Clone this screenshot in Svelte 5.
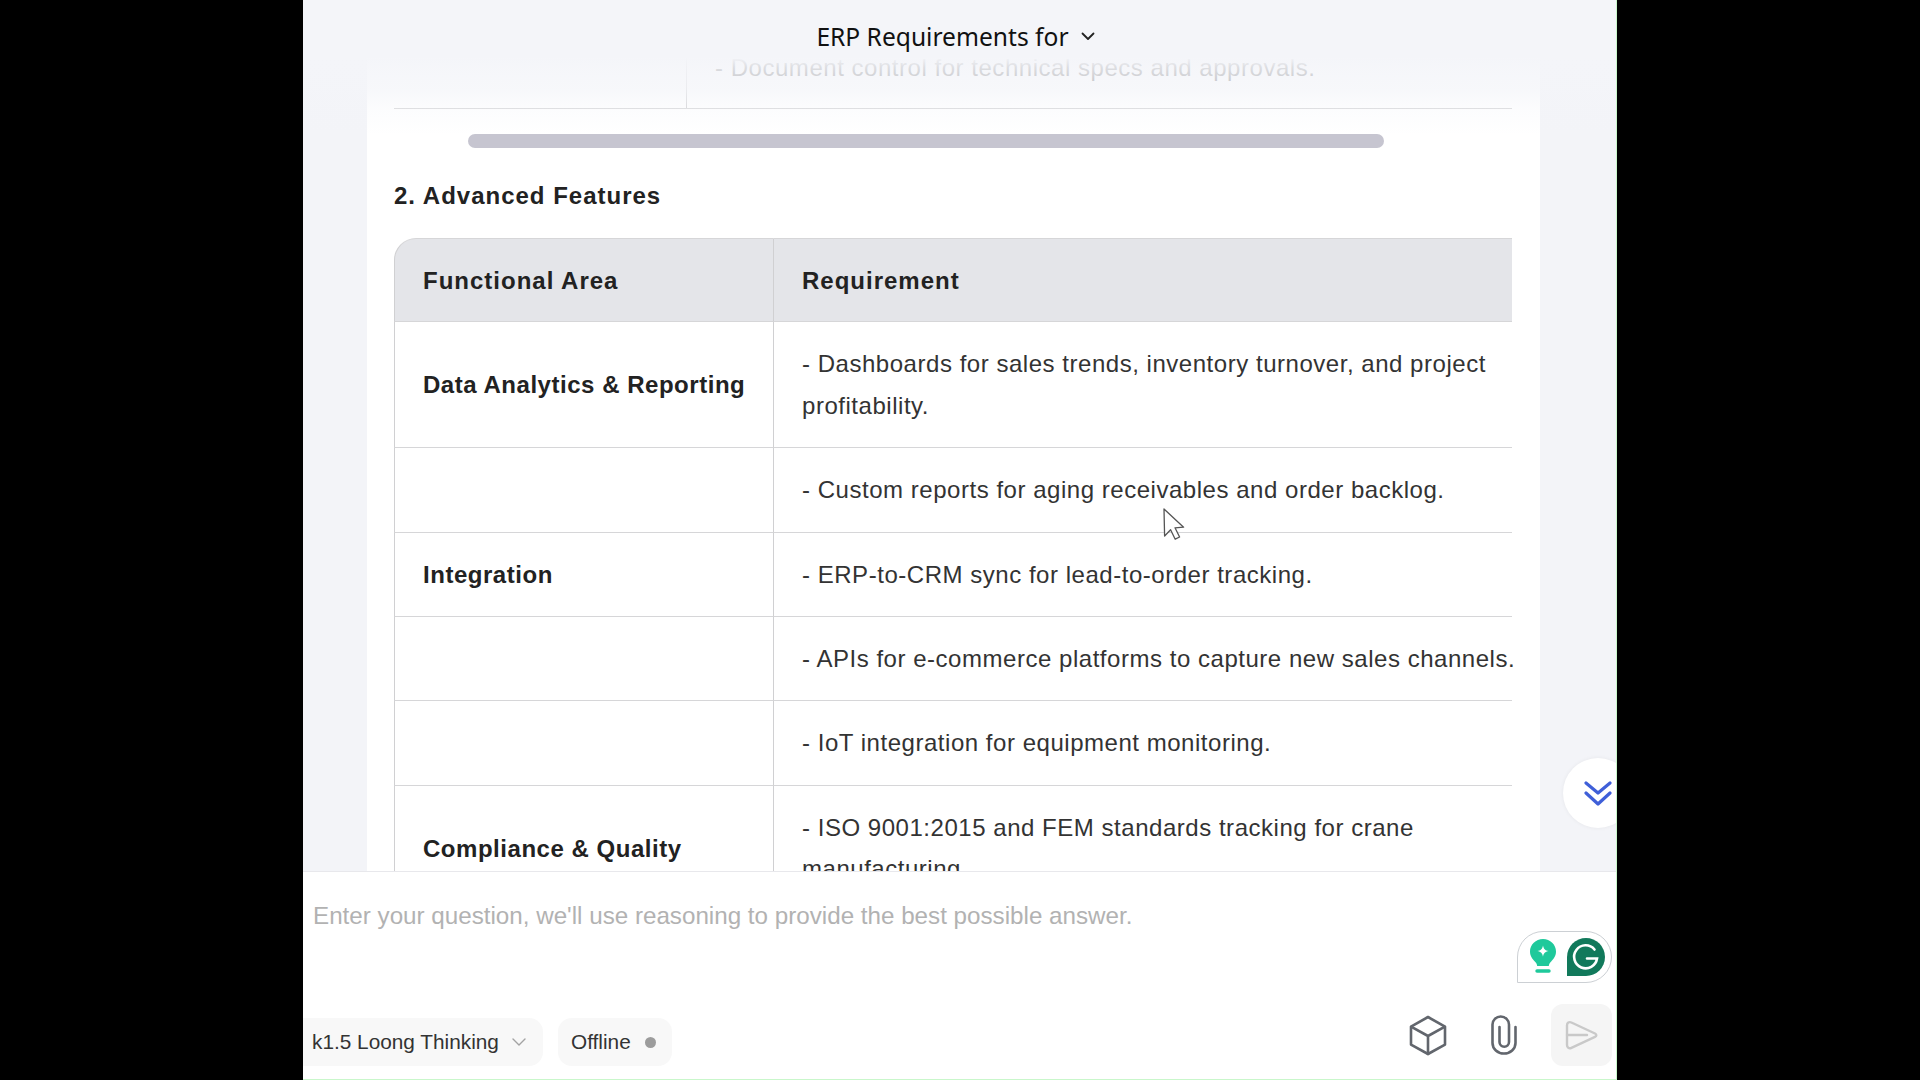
<script lang="ts">
	type Row = { area: string; lines: string[] };

	const rows: Row[] = [
		{
			area: 'Data Analytics & Reporting',
			lines: ['- Dashboards for sales trends, inventory turnover, and project', 'profitability.']
		},
		{ area: '', lines: ['- Custom reports for aging receivables and order backlog.'] },
		{ area: 'Integration', lines: ['- ERP-to-CRM sync for lead-to-order tracking.'] },
		{ area: '', lines: ['- APIs for e-commerce platforms to capture new sales channels.'] },
		{ area: '', lines: ['- IoT integration for equipment monitoring.'] },
		{
			area: 'Compliance & Quality',
			lines: ['- ISO 9001:2015 and FEM standards tracking for crane', 'manufacturing.']
		}
	];
</script>

<div class="frame">
	<main class="chat">
		<header class="topbar">
			<span class="title">ERP Requirements for</span>
			<svg class="title-caret" width="14" height="9" viewBox="0 0 14 9" fill="none" stroke="#222" stroke-width="1.8" stroke-linecap="round" stroke-linejoin="round">
				<path d="M1.5 1.5 7 7l5.5-5.5" />
			</svg>
		</header>

		<div class="card">
			<div class="tail-row">
				<div class="tail-left"></div>
				<div class="tail-right">- Document control for technical specs and approvals.</div>
			</div>
			<div class="scroll-thumb"></div>

			<h2>2. Advanced Features</h2>

			<table>
				<thead>
					<tr>
						<th class="col-area">Functional Area</th>
						<th>Requirement</th>
					</tr>
				</thead>
				<tbody>
					{#each rows as row}
						<tr>
							<td class="col-area">{row.area}</td>
							<td>
								{#each row.lines as line}
									<div>{line}</div>
								{/each}
							</td>
						</tr>
					{/each}
				</tbody>
			</table>
		</div>

		<button type="button" class="to-bottom" aria-label="Scroll to bottom">
			<svg width="28" height="25" viewBox="0 0 28 25" fill="none" stroke="#3f5fd8" stroke-width="3.2" stroke-linecap="round" stroke-linejoin="round">
				<path d="M2 2l12 10L26 2" />
				<path d="M2 12l12 11 12-11" />
			</svg>
		</button>

		<svg class="pointer" width="24" height="34" viewBox="0 0 24 34">
			<path d="M1 1l.6 27 6-6.2 4.6 9.4 4.4-2.2-4.6-9.2 8.6-.6z" fill="#fff" stroke="#555" stroke-width="1.3" stroke-linejoin="round" />
		</svg>
	</main>

	<section class="composer">
		<div class="placeholder">Enter your question, we'll use reasoning to provide the best possible answer.</div>

		<div class="grammarly">
			<svg width="28" height="38" viewBox="0 0 28 38">
				<path d="M14 1C6.800 1 1 6.600 1 13.600c0 4.600 2.500 7.600 4.800 10 1.400 1.500 2.200 2.600 2.400 4.400h11.600c.2-1.800 1-2.900 2.400-4.400 2.300-2.400 4.800-5.400 4.800-10C27 6.600 21.200 1 14 1z" fill="#1fc99b" />
				<path d="M14 7.500c.8 3.600 2 4.800 5.600 5.600-3.600.8-4.800 2-5.600 5.600-.8-3.600-2-4.800-5.600-5.600 3.600-.8 4.800-2 5.600-5.600z" fill="#fff" />
				<path d="M8 33h12" stroke="#1fc99b" stroke-width="3.400" stroke-linecap="round" />
			</svg>
			<svg width="38" height="38" viewBox="0 0 38 38">
				<path d="M19 0a19 19 0 0 1 0 38H0V19A19 19 0 0 1 19 0z" fill="#11795b" />
				<path d="M27.500 11.500A11.500 11.500 0 1 0 30 20.500H20" fill="none" stroke="#fff" stroke-width="2.600" stroke-linecap="round" />
			</svg>
		</div>

		<div class="actions">
			<div class="pills">
				<div class="pill model">
					<span>k1.5 Loong Thinking</span>
					<svg width="14" height="8" viewBox="0 0 14 8" fill="none" stroke="#a3a3a3" stroke-width="1.400" stroke-linecap="round" stroke-linejoin="round">
						<path d="M1 1l6 6 6-6" />
					</svg>
				</div>
				<div class="pill offline">
					<span>Offline</span>
					<i class="dot"></i>
				</div>
			</div>

			<div class="tools">
				<svg class="cube" width="38" height="41" viewBox="0 0 38 41" fill="none" stroke="#62666d" stroke-width="2.600" stroke-linejoin="round" stroke-linecap="round">
					<path d="M19 2l17 9.600v18L19 39 2 29.600V11.600z" />
					<path d="M2.500 11.800 19 21l16.500-9.200M19 21v18" />
				</svg>
				<svg width="26" height="40" viewBox="0 0 26 40" fill="none" stroke="#62666d" stroke-width="2.600" stroke-linecap="round" stroke-linejoin="round">
					<path d="M24.500 12v16a11.500 10.500 0 0 1-23 0V9.500a8.250 8 0 0 1 16.500 0V27a4.750 4.750 0 0 1-9.500 0V12" />
				</svg>
				<button type="button" class="send" aria-label="Send">
					<svg width="33" height="30" viewBox="0 0 33 30" fill="none" stroke="#c9c9c9" stroke-width="2.400" stroke-linecap="round" stroke-linejoin="round">
						<path d="M2 5.500c0-2.800 2-4 4.400-3l23.600 11c1.800.9 1.800 2.600 0 3.400L6.400 27.900C4 29 2 27.500 2 25z" />
						<path d="M2 15h20" />
					</svg>
				</button>
			</div>
		</div>
	</section>
</div>

<style>
	:global(body) {
		background: #000;
		overflow: hidden;
	}

	.frame {
		box-sizing: border-box;
		width: 1314px;
		height: 1080px;
		margin: 0 auto;
		display: flex;
		flex-direction: column;
		background: #f3f4f8;
		border-right: 1px solid #c9f7cb;
		border-bottom: 1px solid #c9f7cb;
		font-family: 'Liberation Sans', Arial, sans-serif;
		overflow: hidden;
	}

	.chat {
		position: relative;
		flex: 0 0 871px;
		overflow: hidden;
	}

	.topbar {
		position: absolute;
		inset: 0 0 auto 0;
		height: 135px;
		z-index: 2;
		padding: 17px 8px 0 0;
		box-sizing: border-box;
		display: flex;
		justify-content: center;
		align-items: flex-start;
		gap: 12px;
		background: linear-gradient(#f4f5f9 0, #f4f5f9 42%, rgb(244 245 249 / 0.88) 50%, rgb(244 245 249 / 0.75) 65%, rgb(244 245 249 / 0.3) 80%, rgb(244 245 249 / 0) 100%);
	}

	.title {
		font-family: 'Noto Sans', 'Open Sans', sans-serif;
		font-size: 24.6px;
		line-height: 40px;
		color: #111;
	}

	.title-caret {
		margin-top: 15px;
	}

	.card {
		margin-left: 64px;
		width: 1173px;
		height: 871px;
		box-sizing: border-box;
		padding: 0 28px 0 27px;
		background: #fff;
		color: #333;
		font-size: 24px;
		letter-spacing: 0.53px;
	}

	.tail-row {
		display: flex;
		height: 109px;
		border-bottom: 1px solid #d6d6d8;
		box-sizing: border-box;
	}

	.tail-left {
		width: 292px;
		border-right: 1px solid #d0d0d2;
	}

	.tail-right {
		padding: 47px 0 0 28px;
		line-height: 41.6px;
	}

	.scroll-thumb {
		margin: 25px 0 0 74px;
		width: 916px;
		height: 14px;
		border-radius: 7px;
		background: #c6c5d0;
	}

	h2 {
		margin: 34px 0 28px;
		font-size: 24px;
		line-height: 28px;
		font-weight: 700;
		color: #222;
		letter-spacing: 1px;
	}

	table {
		width: 1118px;
		table-layout: fixed;
		border-collapse: separate;
		border-spacing: 0;
	}

	th,
	td {
		padding: 21px 0 21px 28px;
		line-height: 41.4px;
		text-align: left;
		white-space: nowrap;
		border-bottom: 1px solid #d6d6d8;
	}

	th {
		padding-bottom: 20px;
		background: #e4e5e9;
		border-top: 1px solid #d6d6d8;
		font-weight: 700;
		color: #222;
		letter-spacing: 1px;
	}

	.col-area {
		width: 350px;
		border-left: 1px solid #d0d0d2;
		border-right: 1px solid #d0d0d2;
		font-weight: 700;
		color: #222;
	}

	th.col-area {
		border-top-left-radius: 22px;
	}

	.to-bottom {
		position: absolute;
		right: -17px;
		top: 758px;
		width: 70px;
		height: 70px;
		border: none;
		border-radius: 50%;
		background: #fff;
		padding: 0;
		display: flex;
		align-items: center;
		justify-content: center;
		box-shadow: 0 0 4px rgb(0 0 0 / 0.06);
		z-index: 3;
	}

	.pointer {
		position: absolute;
		left: 860px;
		top: 508px;
		z-index: 4;
	}

	.composer {
		position: relative;
		flex: 1;
		display: flex;
		flex-direction: column;
		justify-content: space-between;
		background: #fff;
		border-top: 1px solid #e8e8ec;
		padding: 30px 4px 13px 0;
	}

	.placeholder {
		padding-left: 10px;
		font-size: 24.2px;
		line-height: 28px;
		color: #b2b2b2;
	}

	.grammarly {
		position: absolute;
		right: 4px;
		top: 59px;
		width: 95px;
		height: 52px;
		box-sizing: border-box;
		display: flex;
		align-items: center;
		justify-content: flex-end;
		gap: 10px;
		padding-right: 6px;
		background: #fff;
		border: 1.5px solid #ccd0d4;
		border-radius: 28px 28px 28px 0;
	}

	.actions {
		display: flex;
		justify-content: space-between;
		align-items: flex-end;
	}

	.pills {
		display: flex;
		gap: 15px;
	}

	.pill {
		height: 48px;
		box-sizing: border-box;
		display: flex;
		align-items: center;
		background: #f8f8f8;
		border-radius: 14px;
		font-size: 20.8px;
		color: #333;
	}

	.model {
		width: 240px;
		padding-left: 9px;
		gap: 13px;
		border-radius: 0 14px 14px 0;
	}

	.offline {
		width: 114px;
		padding-left: 13px;
		gap: 14px;
	}

	.dot {
		width: 11px;
		height: 11px;
		border-radius: 50%;
		background: #9c9c9c;
	}

	.tools {
		display: flex;
		align-items: center;
		gap: 34px;
		height: 62px;
	}

	.cube {
		margin-right: 10px;
	}

	.send {
		width: 61px;
		height: 62px;
		padding: 0;
		border: none;
		border-radius: 12px;
		background: #f5f5f5;
		display: flex;
		align-items: center;
		justify-content: center;
	}
</style>
